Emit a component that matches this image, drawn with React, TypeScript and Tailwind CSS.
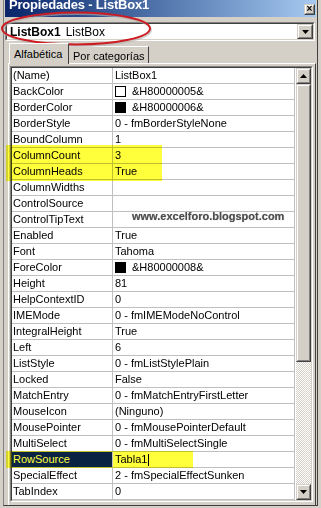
import React from 'react';

type Row = { name: string; value: string; swatch?: 'white' | 'black' };

const rows: Row[] = [
  { name: '(Name)', value: 'ListBox1' },
  { name: 'BackColor', value: '&H80000005&', swatch: 'white' },
  { name: 'BorderColor', value: '&H80000006&', swatch: 'black' },
  { name: 'BorderStyle', value: '0 - fmBorderStyleNone' },
  { name: 'BoundColumn', value: '1' },
  { name: 'ColumnCount', value: '3' },
  { name: 'ColumnHeads', value: 'True' },
  { name: 'ColumnWidths', value: '' },
  { name: 'ControlSource', value: '' },
  { name: 'ControlTipText', value: '' },
  { name: 'Enabled', value: 'True' },
  { name: 'Font', value: 'Tahoma' },
  { name: 'ForeColor', value: '&H80000008&', swatch: 'black' },
  { name: 'Height', value: '81' },
  { name: 'HelpContextID', value: '0' },
  { name: 'IMEMode', value: '0 - fmIMEModeNoControl' },
  { name: 'IntegralHeight', value: 'True' },
  { name: 'Left', value: '6' },
  { name: 'ListStyle', value: '0 - fmListStylePlain' },
  { name: 'Locked', value: 'False' },
  { name: 'MatchEntry', value: '0 - fmMatchEntryFirstLetter' },
  { name: 'MouseIcon', value: '(Ninguno)' },
  { name: 'MousePointer', value: '0 - fmMousePointerDefault' },
  { name: 'MultiSelect', value: '0 - fmMultiSelectSingle' },
  { name: 'RowSource', value: 'Tabla1' },
  { name: 'SpecialEffect', value: '2 - fmSpecialEffectSunken' },
  { name: 'TabIndex', value: '0' },
];

const Arrow = ({ up }: { up?: boolean }) => (
  <svg width="7" height="4" viewBox="0 0 7 4">
    <path d={up ? 'M3.5 0 L7 4 L0 4 Z' : 'M0 0 L7 0 L3.5 4 Z'} fill="#000" />
  </svg>
);

// raised 3d button, windows classic
const Btn = ({ className, children }: { className: string; children?: React.ReactNode }) => (
  <div className={`border border-t-[#d4d0c8] border-l-[#d4d0c8] border-r-[#404040] border-b-[#404040] ${className}`}>
    <div className="h-full w-full border border-t-white border-l-white border-r-[#808080] border-b-[#808080] bg-[#d4d0c8] flex items-center justify-center">
      {children}
    </div>
  </div>
);

export default function App() {
  return (
    <div className="relative w-[321px] h-[508px] overflow-hidden bg-[#d4d0c8] font-['Liberation_Sans',Arial,sans-serif] text-[11px] text-black">
      <div className="ml-[3px] w-[315px] h-[506px] border-l border-r border-b border-l-[#808080] border-r-[#404040] border-b-[#404040] pl-[1px] pr-[1px]">
        {/* title bar */}
        <div className="h-[17px] flex items-start justify-between bg-gradient-to-r from-[#0a246a] to-[#a6caf0] pl-[4px] pr-[1px]">
          <span className="font-bold text-white text-[13px] leading-[13px] -mt-[2px] tracking-[-0.2px] whitespace-nowrap">Propiedades - ListBox1</span>
          <Btn className="w-[11px] h-[11px] mt-[4px]">
            <span className="text-[10px] leading-[10px] font-bold -mt-[1px]">×</span>
          </Btn>
        </div>

        {/* object combo */}
        <div className="mt-[5px] mr-[1px] h-[19px] border border-t-[#808080] border-l-[#808080] border-r-white border-b-white">
          <div className="h-full border border-t-[#404040] border-l-[#404040] border-r-[#d4d0c8] border-b-[#d4d0c8] bg-white flex items-center text-[12px]">
            <span className="pl-[3px] font-bold">ListBox1</span>
            <span className="pl-[5px] flex-1">ListBox</span>
            <Btn className="w-[16px] h-[15px]">
              <Arrow />
            </Btn>
          </div>
        </div>

        {/* tabs */}
        <div className="mt-[2px] pl-[4px] flex items-end h-[20px] whitespace-nowrap">
          <div className="w-[60px] bg-[#d4d0c8] border-t border-l border-r border-t-white border-l-white border-r-[#404040] pl-[4px] pt-[2px] relative z-10 -mb-[1px] h-[21px]">Alfabética</div>
          <div className="h-[17px] w-[80px] border-t border-r border-t-white border-r-[#404040] pl-[4px] pt-[1px]">Por categorías</div>
        </div>

        {/* tab panel */}
        <div className="ml-[3px] h-[442px] border-t border-l border-r border-t-white border-l-white border-r-[#404040] pt-[2px] pl-[1px] pr-[2px]">
          <div className="h-[436px] border border-t-[#808080] border-l-[#808080] border-r-white border-b-white">
            <div className="h-full border border-t-[#404040] border-l-[#404040] border-r-[#d4d0c8] border-b-[#d4d0c8] flex bg-white">
              <div className="w-[284px]">
                {rows.map((r) => {
                  const sel = r.name === 'RowSource';
                  return (
                    <div key={r.name} className="flex h-[16px] border-b border-[#c0c0c0]">
                      <div className={`w-[101px] border-r border-[#c0c0c0] pl-[1px] leading-[15px] whitespace-nowrap ${sel ? 'bg-[#0b2342] text-[#ffff40] relative z-10' : ''}`}>
                        {r.name}
                      </div>
                      <div className="flex-1 border-r border-[#c0c0c0] pl-[2px] leading-[15px] flex items-center whitespace-nowrap">
                        {r.swatch && (
                          <span className={`inline-block w-[11px] h-[11px] border border-black mr-[6px] ${r.swatch === 'black' ? 'bg-black' : 'bg-white'}`} />
                        )}
                        <span>{r.value}</span>
                        {sel && <span className="inline-block w-px h-[12px] bg-black ml-[1px]" />}
                      </div>
                    </div>
                  );
                })}
              </div>
              {/* scrollbar */}
              <div className="w-[16px] flex flex-col border-l border-white">
                <Btn className="w-[15px] h-[16px]">
                  <Arrow up />
                </Btn>
                <Btn className="w-[15px] h-[278px]" />
                <div className="flex-1 bg-[repeating-conic-gradient(#d4d0c8_0_25%,#ffffff_0_50%)] bg-[length:2px_2px]" />
                <Btn className="w-[15px] h-[16px]">
                  <Arrow />
                </Btn>
              </div>
            </div>
          </div>
        </div>
      </div>

      {/* watermark */}
      <div className="absolute left-[132px] top-[208px] font-bold text-[11px] text-[#4d4d4d] [text-shadow:0_0_1px_#999]">
        www.excelforo.blogspot.com
      </div>

      {/* highlighter marks */}
      <div className="absolute left-[6px] top-[145px] w-[156px] h-[36px] bg-[#ffff3c] mix-blend-multiply" />
      <div className="absolute left-[6px] top-[451px] w-[187px] h-[17px] bg-[#ffff3c] mix-blend-multiply" />

      {/* red circle */}
      <svg className="absolute left-0 top-[9px]" width="156" height="40" viewBox="0 0 156 40">
        <ellipse cx="76" cy="19.5" rx="74" ry="16" fill="none" stroke="#b0b0b0" strokeWidth="2" opacity="0.6" transform="translate(1 1.5)" />
        <ellipse cx="76" cy="19.5" rx="74" ry="16" fill="none" stroke="#cc1d22" strokeWidth="2" />
      </svg>
    </div>
  );
}
